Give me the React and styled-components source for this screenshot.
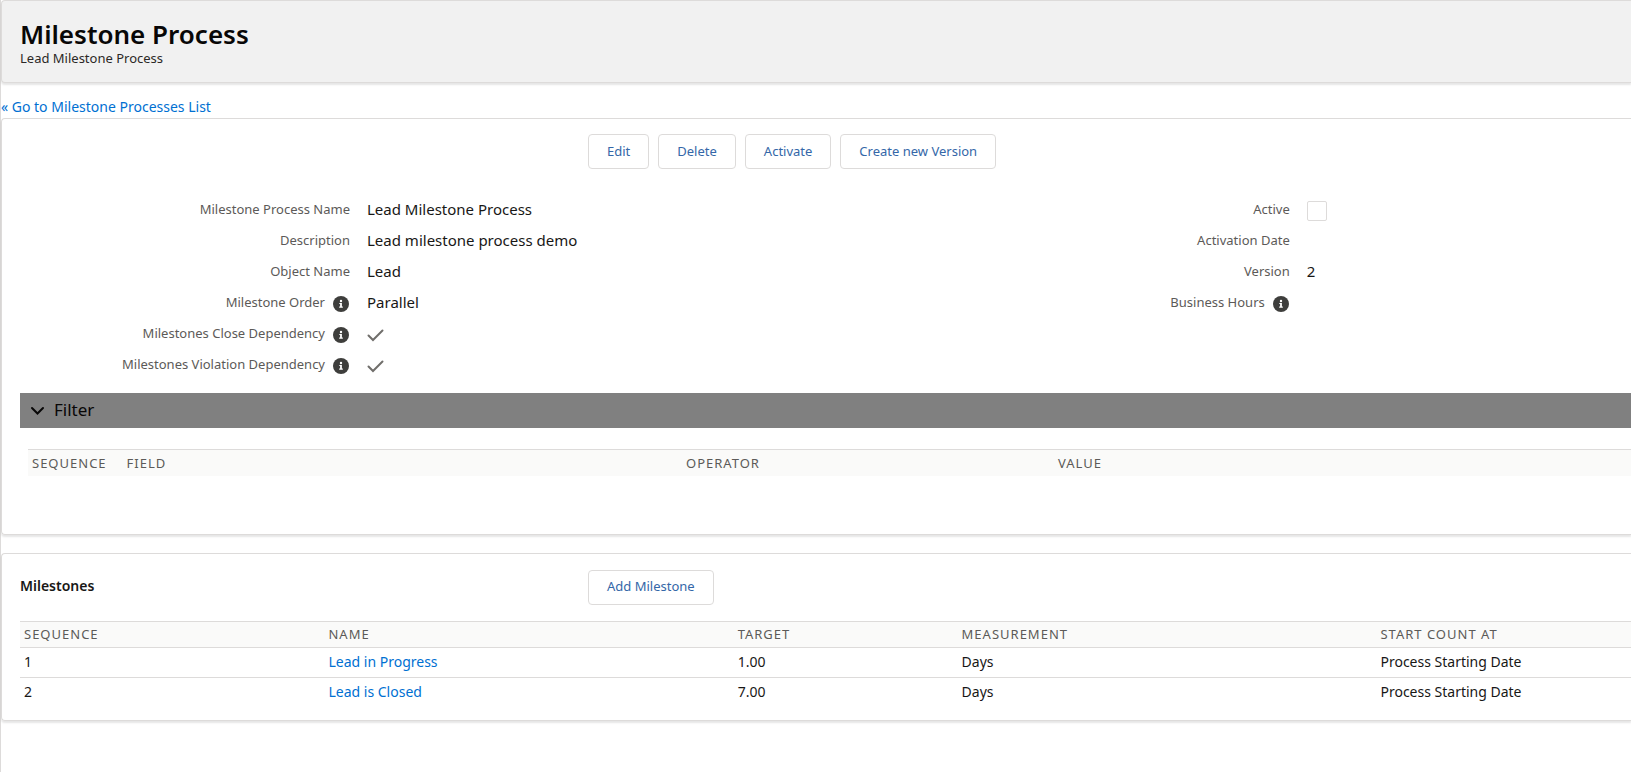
import React, { useState } from "react";
import styled, { createGlobalStyle } from "styled-components";

const GlobalStyle = createGlobalStyle`
  * {
    box-sizing: border-box;
  }

  body {
    margin: 0;
    background: #fff;
    color: #181716;
    font-family: "Noto Sans", "Open Sans", sans-serif;
    font-size: 14px;
    line-height: 20px;
    overflow-x: hidden;
  }
`;

const Page = styled.main`
  min-height: 100vh;
  border-left: 1px solid #dddbda;
`;

const Card = styled.section`
  border: 1px solid #dddbda;
  border-right: 0;
  border-radius: 4px 0 0 4px;
  box-shadow: 0 2px 2px rgba(0, 0, 0, 0.1);
  padding-left: 18px;
`;

const Header = styled(Card).attrs({ as: "header" })`
  background: #f1f1f1;
  padding-top: 19px;
  padding-bottom: 14px;
`;

const Title = styled.h1`
  margin: 0;
  color: #080707;
  font-size: 26px;
  font-weight: 600;
  line-height: 28px;
`;

const Subtitle = styled.p`
  margin: 0;
  color: #2b2826;
  font-size: 13px;
  line-height: 20px;
`;

const Link = styled.a`
  color: #0070d2;
  text-decoration: none;
`;

const BackLink = styled.nav`
  margin: 14px 0 1px;
`;

const ProcessCard = styled(Card)`
  padding-top: 15px;
  padding-bottom: 58px;
`;

const MilestonesCard = styled(Card)`
  margin-top: 18px;
  padding-top: 16px;
  padding-bottom: 13px;
`;

const Toolbar = styled.div`
  display: flex;
  gap: 9px;
  margin-left: 568px;
`;

const Button = styled.button`
  height: 35px;
  padding: 0 18px 2px;
  border: 1px solid #dddbda;
  border-radius: 4px;
  background: #fff;
  color: #3467a8;
  font: inherit;
  font-size: 13px;
  white-space: nowrap;
`;

const Details = styled.div`
  display: grid;
  grid-template-columns: 7fr 5fr;
  margin: 26px 0 12px;
`;

const Field = styled.div`
  display: flex;
  gap: 17px;
  height: 31px;
  align-items: center;
`;

const Label = styled.label`
  display: flex;
  flex: 0 0 330px;
  gap: 8px;
  align-items: center;
  justify-content: flex-end;
  color: #5c5a58;
  font-size: 13px;
`;

const FieldText = styled.span`
  padding-bottom: 3px;
`;

const Value = styled.span`
  display: flex;
  align-items: center;
  font-size: 15px;
`;

const Checkbox = styled.input`
  appearance: none;
  width: 20px;
  height: 20px;
  margin: 0;
  border: 1px solid #dddbda;
  border-radius: 2px;
  background: #fff;
`;

const SectionBar = styled.button`
  display: flex;
  gap: 9px;
  align-items: center;
  width: 100%;
  height: 35px;
  padding: 0 10px;
  border: 0;
  background: #808080;
  color: #080707;
  font: inherit;
  font-size: 17px;
`;

const SectionTitle = styled.span`
  padding-bottom: 2px;
`;

const FilterBody = styled.div`
  margin: 21px 0 0 8px;
`;

const Table = styled.table`
  width: 100%;
  border-collapse: collapse;
  table-layout: fixed;
  text-align: left;
`;

const HeadCell = styled.th`
  width: ${(props) => props.$width};
  height: 26px;
  padding: 0 4px;
  border-top: 1px solid #dddbda;
  background: #fafaf9;
  color: #5c5a58;
  font-size: 13px;
  font-weight: 400;
  letter-spacing: 1px;
  text-transform: uppercase;
`;

const Cell = styled.td`
  height: 30px;
  padding: 0 4px;
  border-top: 1px solid #dddbda;
`;

const ListHeader = styled.div`
  display: flex;
  align-items: center;
  margin-bottom: 16px;
`;

const ListTitle = styled.h2`
  flex: 0 0 568px;
  margin: 0;
  padding-bottom: 2px;
  font-size: 14px;
  font-weight: 600;
`;

const InfoIcon = () => (
  <svg width="17" height="16" viewBox="0 0 17 16" aria-hidden="true">
    <circle cx="8" cy="8" r="8" fill="#3e3e3c" />
    <circle cx="8" cy="5" r="1.2" fill="#fff" />
    <path d="M6.3 7h2.6v3.5h.9v1.2H6.2v-1.2h.9V8.1h-.8z" fill="#fff" />
  </svg>
);

const CheckIcon = () => (
  <svg width="17" height="14" viewBox="0 0 17 14" role="img" aria-label="Yes">
    <path
      d="M1.5 7.5 6 12 15.5 2.5"
      fill="none"
      stroke="#706e6b"
      strokeWidth="2"
      strokeLinecap="round"
    />
  </svg>
);

const ChevronIcon = () => (
  <svg width="15" height="10" viewBox="0 0 15 10" aria-hidden="true">
    <path
      d="m2 2 5.5 5.5L13 2"
      fill="none"
      stroke="#080707"
      strokeWidth="2"
      strokeLinecap="round"
    />
  </svg>
);

const processFields = [
  { id: "name", label: "Milestone Process Name", value: "Lead Milestone Process" },
  { id: "description", label: "Description", value: "Lead milestone process demo" },
  { id: "object", label: "Object Name", value: "Lead" },
  { id: "order", label: "Milestone Order", info: true, value: "Parallel" },
  { id: "close", label: "Milestones Close Dependency", info: true, checked: true },
  { id: "violation", label: "Milestones Violation Dependency", info: true, checked: true },
];

const statusFields = [
  { id: "active", label: "Active", editable: true },
  { id: "activationDate", label: "Activation Date" },
  { id: "version", label: "Version", value: "2" },
  { id: "hours", label: "Business Hours", info: true },
];

const filterColumns = [
  { name: "Sequence", width: "5.9%" },
  { name: "Field", width: "34.9%" },
  { name: "Operator", width: "23.2%" },
  { name: "Value", width: "36%" },
];

const milestoneColumns = [
  { name: "Sequence", width: "18.9%" },
  { name: "Name", width: "25.4%" },
  { name: "Target", width: "13.9%" },
  { name: "Measurement", width: "26%" },
  { name: "Start Count At", width: "15.8%" },
];

const milestones = [
  { seq: 1, name: "Lead in Progress", target: "1.00", unit: "Days", start: "Process Starting Date" },
  { seq: 2, name: "Lead is Closed", target: "7.00", unit: "Days", start: "Process Starting Date" },
];

const FieldList = ({ fields }) => (
  <div>
    {fields.map((field) => (
      <Field key={field.id}>
        <Label as={field.editable ? "label" : "span"} htmlFor={field.editable && field.id}>
          <FieldText>{field.label}</FieldText>
          {field.info && <InfoIcon />}
        </Label>
        <Value>
          {field.value && <FieldText>{field.value}</FieldText>}
          {field.checked && <CheckIcon />}
          {field.editable && <Checkbox id={field.id} type="checkbox" />}
        </Value>
      </Field>
    ))}
  </div>
);

const TableHead = ({ columns }) => (
  <thead>
    <tr>
      {columns.map((column) => (
        <HeadCell key={column.name} $width={column.width}>
          {column.name}
        </HeadCell>
      ))}
    </tr>
  </thead>
);

const App = () => {
  const [filterOpen, setFilterOpen] = useState(true);

  return (
    <Page>
      <GlobalStyle />
      <Header>
        <Title>Milestone Process</Title>
        <Subtitle>Lead Milestone Process</Subtitle>
      </Header>

      <BackLink>
        <Link href="#processes">« Go to Milestone Processes List</Link>
      </BackLink>

      <ProcessCard>
        <Toolbar>
          <Button>Edit</Button>
          <Button>Delete</Button>
          <Button>Activate</Button>
          <Button>Create new Version</Button>
        </Toolbar>
        <Details>
          <FieldList fields={processFields} />
          <FieldList fields={statusFields} />
        </Details>
        <SectionBar aria-expanded={filterOpen} onClick={() => setFilterOpen(!filterOpen)}>
          <ChevronIcon />
          <SectionTitle>Filter</SectionTitle>
        </SectionBar>
        {filterOpen && (
          <FilterBody>
            <Table>
              <TableHead columns={filterColumns} />
            </Table>
          </FilterBody>
        )}
      </ProcessCard>

      <MilestonesCard>
        <ListHeader>
          <ListTitle>Milestones</ListTitle>
          <Button>Add Milestone</Button>
        </ListHeader>
        <Table>
          <TableHead columns={milestoneColumns} />
          <tbody>
            {milestones.map((item) => (
              <tr key={item.seq}>
                <Cell>{item.seq}</Cell>
                <Cell>
                  <Link href={`#milestone-${item.seq}`}>{item.name}</Link>
                </Cell>
                <Cell>{item.target}</Cell>
                <Cell>{item.unit}</Cell>
                <Cell>{item.start}</Cell>
              </tr>
            ))}
          </tbody>
        </Table>
      </MilestonesCard>
    </Page>
  );
};

export default App;
